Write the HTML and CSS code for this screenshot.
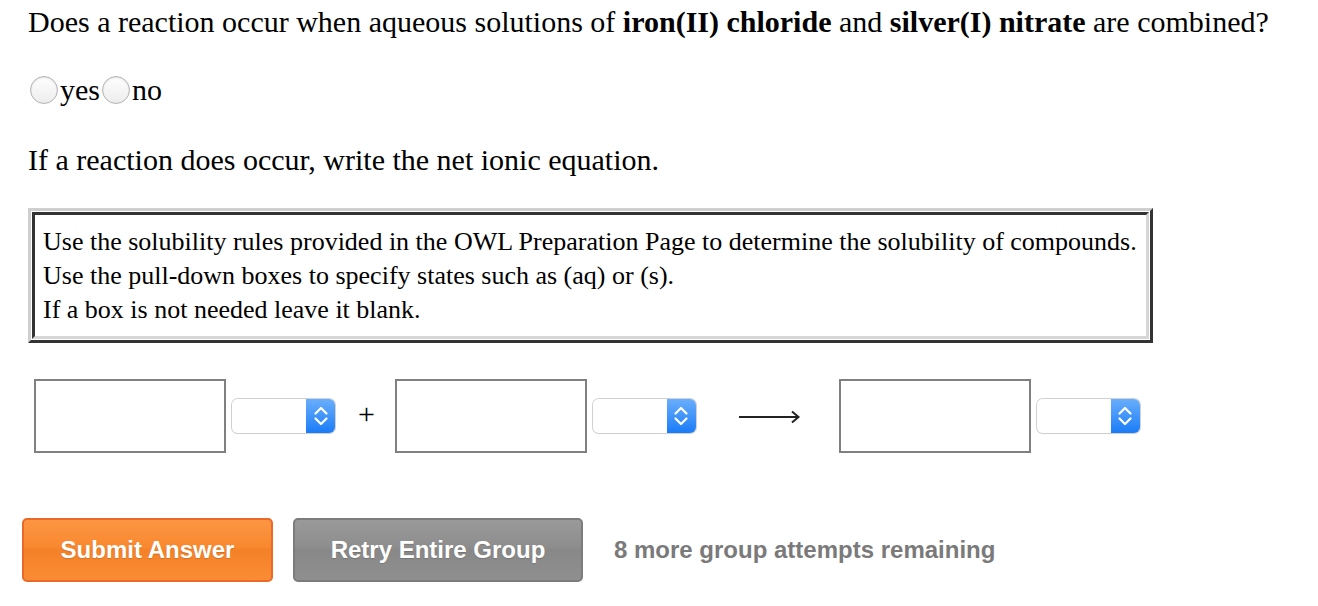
FILE: index.html
```html
<!DOCTYPE html>
<html>
<head>
<meta charset="utf-8">
<link rel="stylesheet" href="styles.css">
</head>
<body>
<div class="page">
  <p class="question">Does a reaction occur when aqueous solutions of <b>iron(II) chloride</b> and <b>silver(I) nitrate</b> are combined?</p>
  <div class="choices">
    <label class="choice"><span class="radio"></span>yes</label>
    <label class="choice"><span class="radio"></span>no</label>
  </div>
  <p class="prompt">If a reaction does occur, write the net ionic equation.</p>
  <div class="info-outer">
    <div class="info-inner">
      Use the solubility rules provided in the OWL Preparation Page to determine the solubility of compounds.<br>
      Use the pull-down boxes to specify states such as (aq) or (s).<br>
      If a box is not needed leave it blank.
    </div>
  </div>
  <div class="equation">
    <div class="box"></div>
    <div class="sel"><span class="sel-field"></span><span class="sel-btn"><svg width="16" height="24" viewBox="0 0 16 24"><path d="M2.5 9.5 L8 4 L13.5 9.5 M2.5 14.5 L8 20 L13.5 14.5" fill="none" stroke="#fff" stroke-width="2.2" stroke-linecap="round" stroke-linejoin="round"/></svg></span></div>
    <span class="plus">+</span>
    <div class="box"></div>
    <div class="sel"><span class="sel-field"></span><span class="sel-btn"><svg width="16" height="24" viewBox="0 0 16 24"><path d="M2.5 9.5 L8 4 L13.5 9.5 M2.5 14.5 L8 20 L13.5 14.5" fill="none" stroke="#fff" stroke-width="2.2" stroke-linecap="round" stroke-linejoin="round"/></svg></span></div>
    <svg class="arrow" width="62" height="14" viewBox="0 0 62 14"><path d="M0 7 H59" stroke="#222" stroke-width="2.2"/><path d="M53 1.5 L59.5 7 L53 12.5" fill="none" stroke="#222" stroke-width="2"/></svg>
    <div class="box"></div>
    <div class="sel"><span class="sel-field"></span><span class="sel-btn"><svg width="16" height="24" viewBox="0 0 16 24"><path d="M2.5 9.5 L8 4 L13.5 9.5 M2.5 14.5 L8 20 L13.5 14.5" fill="none" stroke="#fff" stroke-width="2.2" stroke-linecap="round" stroke-linejoin="round"/></svg></span></div>
  </div>
  <div class="actions">
    <button class="btn btn-submit">Submit Answer</button>
    <button class="btn btn-retry">Retry Entire Group</button>
    <span class="remaining">8 more group attempts remaining</span>
  </div>
</div>
</body>
</html>
```
FILE: styles.css
```css
html, body {
  margin: 0;
  padding: 0;
  background: #fff;
}
.page {
  padding: 2px 0 0 28px;
  font-family: "Liberation Serif", "Times New Roman", serif;
  color: #000;
}
.question {
  margin: 0;
  font-size: 30px;
  line-height: 40px;
}
.choices {
  display: flex;
  align-items: center;
  margin-top: 28px;
  font-size: 30px;
  line-height: 40px;
}
.choice {
  display: flex;
  align-items: center;
}
.radio {
  display: inline-block;
  width: 28px;
  height: 28px;
  border-radius: 50%;
  border: 1px solid #b4b4b4;
  background: linear-gradient(#ffffff, #ececec);
  box-shadow: inset 0 1px 2px rgba(0,0,0,0.12);
  margin: 0 2px 0 2px;
  box-sizing: border-box;
}
.prompt {
  margin: 30px 0 0 0;
  font-size: 30px;
  line-height: 40px;
}
.info-outer {
  margin-top: 28px;
  width: 1125px;
  box-sizing: border-box;
  border: 3px solid;
  border-color: #cfcfcf #333 #333 #cfcfcf;
  padding: 1px;
}
.info-inner {
  border: 3px solid;
  border-color: #333 #d6d6d6 #d6d6d6 #333;
  padding: 10px 8px 9px 8px;
  font-size: 26px;
  line-height: 34px;
}
.equation {
  display: flex;
  align-items: center;
  margin-top: 36px;
  padding-left: 6px;
}
.box {
  width: 192px;
  height: 74px;
  box-sizing: border-box;
  border: 2px solid #808080;
  background: #fff;
}
.sel {
  display: flex;
  width: 103px;
  height: 34px;
  margin-left: 6px;
  border-radius: 6px;
  box-shadow: 0 0 0 1px #d0d0d0, 0 1px 1px rgba(0,0,0,0.15);
  overflow: hidden;
}
.sel-field {
  flex: 1;
  background: #fff;
}
.sel-btn {
  width: 29px;
  display: flex;
  align-items: center;
  justify-content: center;
  background: linear-gradient(#6aaefc, #1a7cf7);
}
.plus {
  font-size: 30px;
  margin: 0 20px 0 23px;
  line-height: 34px;
  padding-bottom: 4px;
}
.arrow {
  margin: 2px 38px 0 43px;
}
.actions {
  display: flex;
  align-items: center;
  margin-top: 65px;
  margin-left: -6px;
  font-family: "Liberation Sans", Arial, sans-serif;
  font-weight: bold;
  font-size: 24px;
}
.btn {
  box-sizing: border-box;
  height: 64px;
  padding: 0;
  border-radius: 5px;
  font-family: inherit;
  font-weight: bold;
  font-size: 24px;
  color: #fff;
  white-space: nowrap;
  text-align: center;
  text-shadow: 0 1px 1px rgba(0,0,0,0.15);
}
.btn-submit {
  width: 251px;
  border: 2px solid #ea6a2a;
  background: linear-gradient(#fc9643 0%, #f9882f 45%, #f48128 50%, #fb8c35 100%);
}
.btn-retry {
  width: 290px;
  margin-left: 20px;
  border: 2px solid #7c7c7c;
  background: linear-gradient(#9a9a9a 0%, #8d8d8d 45%, #888 50%, #8f8f8f 100%);
}
.remaining {
  margin-left: 31px;
  color: #7a7a7a;
}
```
